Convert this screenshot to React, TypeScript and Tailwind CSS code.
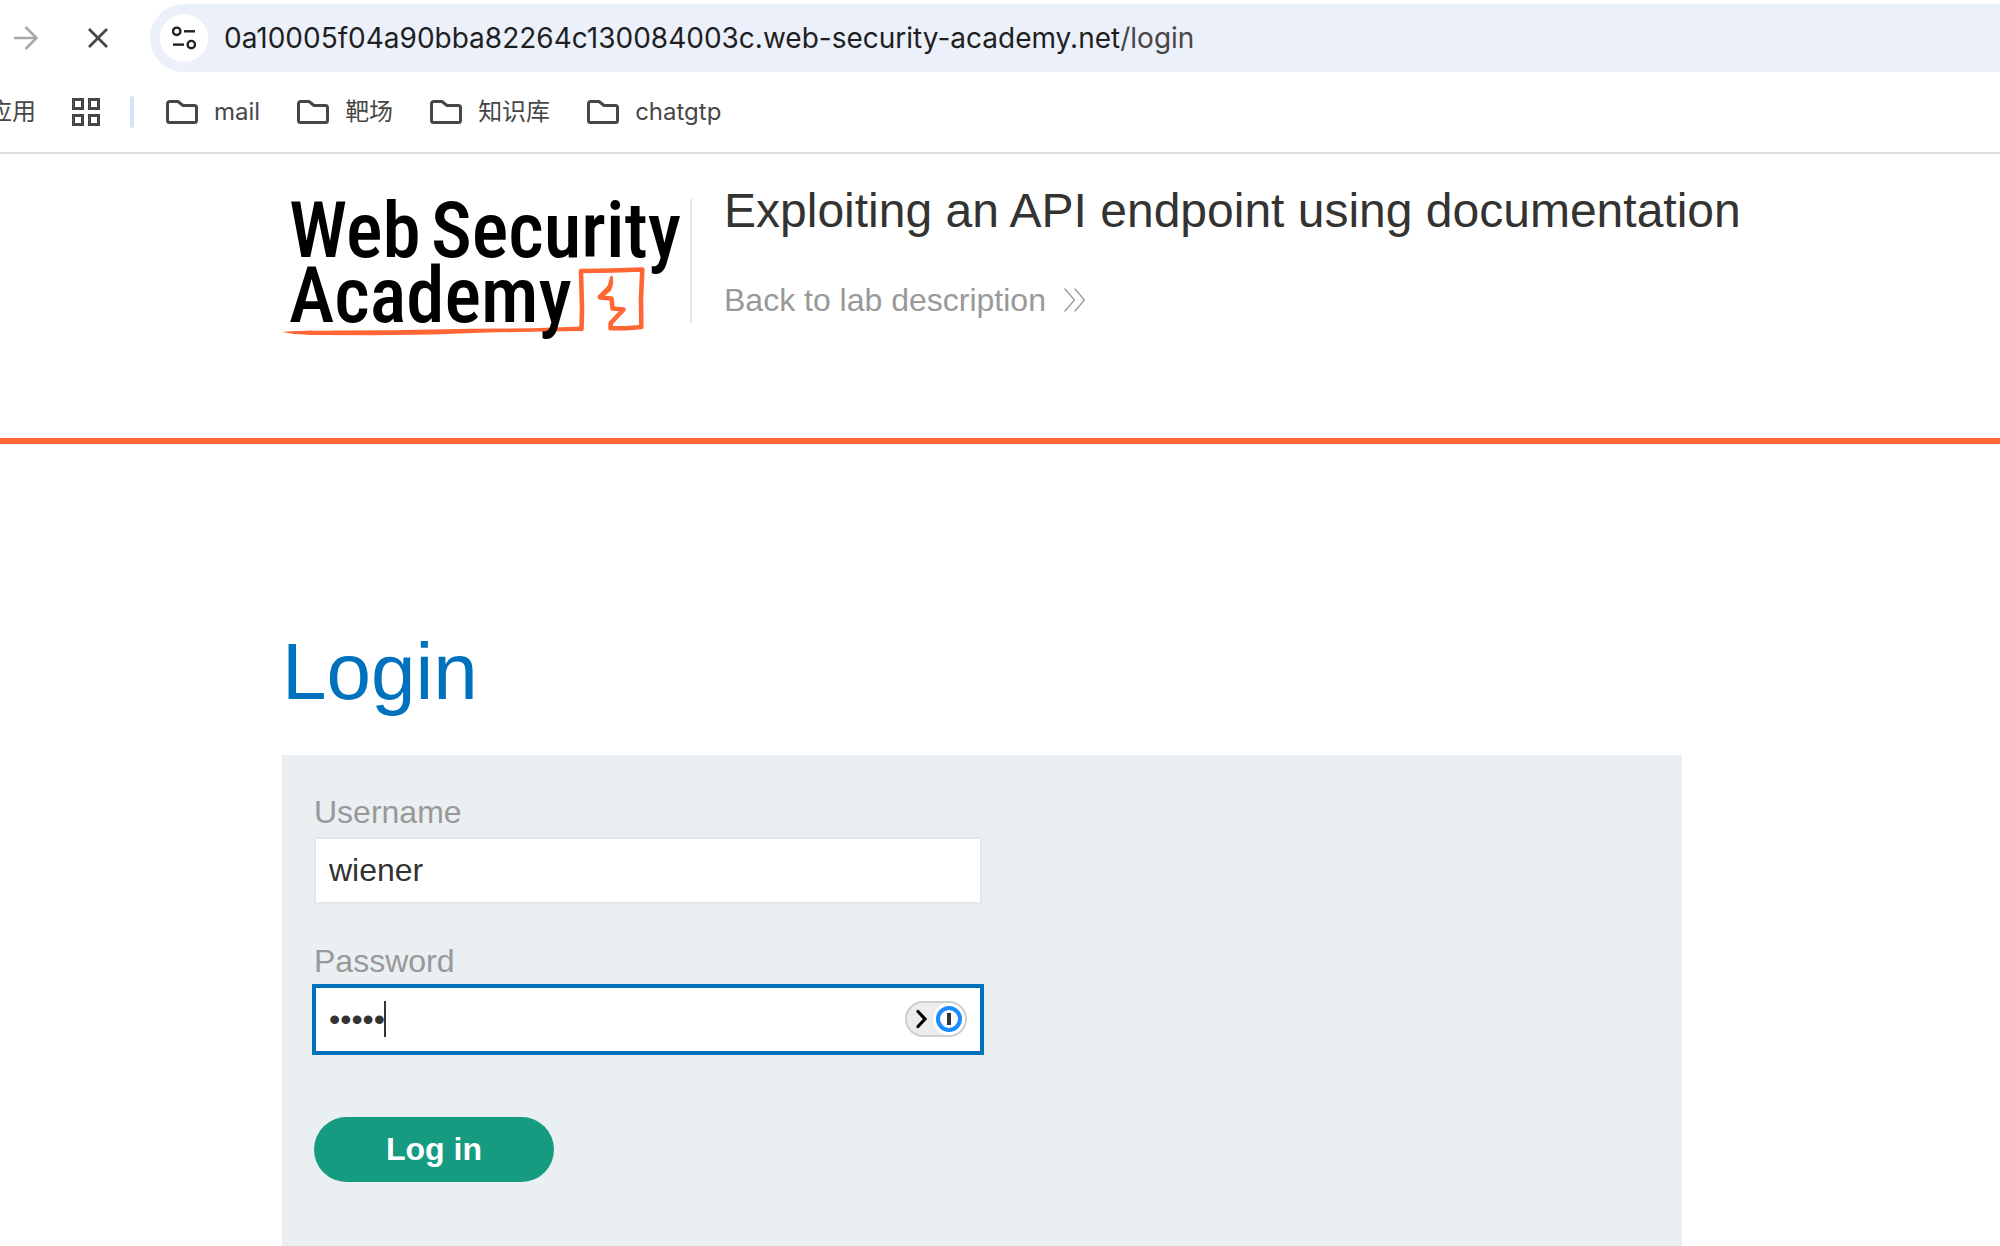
import React, { useState } from 'react'

const bookmarks = ['mail', '靶场', '知识库', 'chatgtp']

function TuneIcon() {
  return (
    <svg width="24" height="24" viewBox="0 0 24 24" fill="none" stroke="#1f1f1f" strokeWidth="2.4" aria-hidden="true">
      <circle cx="4.7" cy="5.3" r="3.7" />
      <path d="M12 5.3h11" />
      <path d="M1 18.6h11" />
      <circle cx="19.3" cy="18.6" r="3.7" />
    </svg>
  )
}

function FolderIcon() {
  return (
    <svg width="32" height="24" viewBox="0 0 32 24" fill="none" stroke="#474747" strokeWidth="3" strokeLinejoin="round" aria-hidden="true">
      <path d="M3.5 1.5h8.5l5 4h11.500a2 2 0 0 1 2 2v13a2 2 0 0 1-2 2h-25a2 2 0 0 1-2-2v-17a2 2 0 0 1 2-2z" />
    </svg>
  )
}

function AcademyLogo() {
  return (
    <svg width="400" height="150" viewBox="0 0 400 150" role="img" aria-label="Web Security Academy">
      {/* underline that runs into the box with the bolt */}
      <path
        fill="#ff6633"
        d="M.5 132.900C12 131.600 30 131.800 62 131.500L110 131.300 190 129.800 250 129.200 299 127.500 301 132 262 132.500 205 133.500 150 135.600 90 136.200 30 136 12 135z"
      />
      <path
        fill="none"
        stroke="#ff6633"
        strokeWidth="4.6"
        strokeLinecap="round"
        strokeLinejoin="round"
        d="M299.500 130L300 110 299 72 330 71.500 360.300 70.500 359 100 359.300 128 345 129.200 328.500 129.300 328.800 124 341.500 110.500 330.500 109.500 329.500 99.500 318 98.500 328 87.500"
      />
      <path fill="#ff6633" d="M328.300 77.500c1.300-2 2.700-1 2.600 1.500l.3 5.500-2.200 7-7.500 6.500-6.500-.5 10.500-10z" />
      <g className="font-['Roboto_Condensed',sans-serif] text-[77px] font-medium" fill="#000">
        <text x="7" y="58">Web</text>
        <text x="149" y="58">Security</text>
        <text x="7" y="123">Academy</text>
      </g>
    </svg>
  )
}

function BrowserBar() {
  return (
    <div className="border-b-2 border-[#e0e0e0] font-[Inter,'Noto_Sans_CJK_SC',sans-serif]">
      <div className="flex items-center pt-1">
        <button type="button" aria-label="Forward" className="ml-3.5">
          <svg width="24" height="24" viewBox="0 0 24 24" fill="none" stroke="#a8a8a8" strokeWidth="2.6">
            <path d="M0 12h22M11.500 1l11 11-11 11" />
          </svg>
        </button>
        <button type="button" aria-label="Stop loading" className="ml-[50px]">
          <svg width="20" height="20" viewBox="0 0 20 20" fill="none" stroke="#474747" strokeWidth="2.8">
            <path d="M1 1l18 18M19 1L1 19" />
          </svg>
        </button>
        <div className="ml-[42px] flex h-[68px] flex-1 items-center rounded-l-full bg-[#ecf0fa] pl-2.5">
          <button type="button" aria-label="Site information" className="flex size-12 items-center justify-center rounded-full bg-white">
            <TuneIcon />
          </button>
          <div className="ml-4 text-[28px] text-[#1f1f1f]">
            0a10005f04a90bba82264c130084003c.web-security-academy.net<span className="text-[#474747]">/login</span>
          </div>
        </div>
      </div>
      <nav className="flex h-20 items-center text-2xl text-[#474747]">
        <a href="#apps" className="-ml-3">应用</a>
        <button type="button" aria-label="All apps" className="ml-9">
          <svg width="28" height="28" viewBox="0 0 28 28" fill="none" stroke="#474747" strokeWidth="3">
            <path d="M1.500 1.500h9v9h-9zM17.500 1.500h9v9h-9zM1.500 17.500h9v9h-9zM17.500 17.500h9v9h-9z" />
          </svg>
        </button>
        <div className="ml-[30px] h-8 w-1 rounded-full bg-[#d3e3fd]" />
        <div className="ml-8 flex gap-[37px]">
          {bookmarks.map(name => (
            <a key={name} href="#bookmark" className="flex items-center gap-4">
              <FolderIcon />
              {name}
            </a>
          ))}
        </div>
      </nav>
    </div>
  )
}

export default function App() {
  const [username, setUsername] = useState('wiener')
  const [password, setPassword] = useState('peter')

  return (
    <div className="min-h-screen bg-white font-['Liberation_Sans',Arial,sans-serif] text-[32px] leading-9 text-[#333332]">
      <BrowserBar />
      <header className="border-b-6 border-[#ff6633]">
        <div className="ml-[282px] flex pt-[29px] pb-[115px]">
          <div className="mt-4 h-31 w-[410px] shrink-0 border-r-2 border-[#e5e5e5]">
            <AcademyLogo />
          </div>
          <div className="ml-8">
            <h2 className="text-5xl leading-14">Exploiting an API endpoint using documentation</h2>
            <a href="#lab" className="mt-[43px] flex items-center text-[#999]">
              Back to lab description
              <svg className="ml-[18px]" width="22" height="24" viewBox="0 0 22 24" fill="none" stroke="#999" strokeWidth="1.3" aria-hidden="true">
                <path d="M.5.5l10 11.500-10 11.500M10.500.5l10 11.500-10 11.500" />
              </svg>
            </a>
          </div>
        </div>
      </header>
      <main className="ml-[282px] max-w-[1400px] pt-[180px]">
        <h1 className="text-[80px] leading-24 text-[#0071bc]">Login</h1>
        <form className="mt-[35px] bg-[#eaeff2] px-8 pt-[39px] pb-16" onSubmit={e => e.preventDefault()}>
          <label htmlFor="username" className="block text-[#999]">Username</label>
          <input
            id="username"
            type="text"
            value={username}
            onChange={e => setUsername(e.target.value)}
            className="mt-[7px] block h-[67px] w-[668px] border-2 border-[#e6e6e6] bg-white px-[13px] outline-none"
          />
          <label htmlFor="password" className="mt-[39px] block text-[#999]">Password</label>
          <div className="relative mt-[7px] w-[668px]">
            <input
              id="password"
              type="password"
              value={password}
              onChange={e => setPassword(e.target.value)}
              className="block h-[67px] w-full border-2 border-[#0071bc] bg-white px-[13px] outline-2 outline-[#0071bc]"
            />
            <span className="absolute top-[15px] left-[70px] h-9 w-0.5 bg-[#333332]" />
            <button type="button" aria-label="Fill password" className="absolute top-[15px] right-[15px]">
              <svg width="62" height="36" viewBox="0 0 62 36" fill="none">
                <rect x="1" y="1" width="60" height="34" rx="17" fill="#ececec" stroke="#cfcfcf" strokeWidth="2" />
                <circle cx="44" cy="18" r="16" fill="#fff" />
                <circle cx="44" cy="18" r="11" stroke="#1a8cff" strokeWidth="4" />
                <path d="M44 12v12" stroke="#333" strokeWidth="4" />
                <path d="M13 10.500l7 7.500-7 7.500" stroke="#000" strokeWidth="3.2" strokeLinecap="round" />
              </svg>
            </button>
          </div>
          <button type="submit" className="mt-16 h-[65px] w-60 rounded-full bg-[#159c80] pb-0.5 font-bold text-white">Log in</button>
        </form>
      </main>
    </div>
  )
}
